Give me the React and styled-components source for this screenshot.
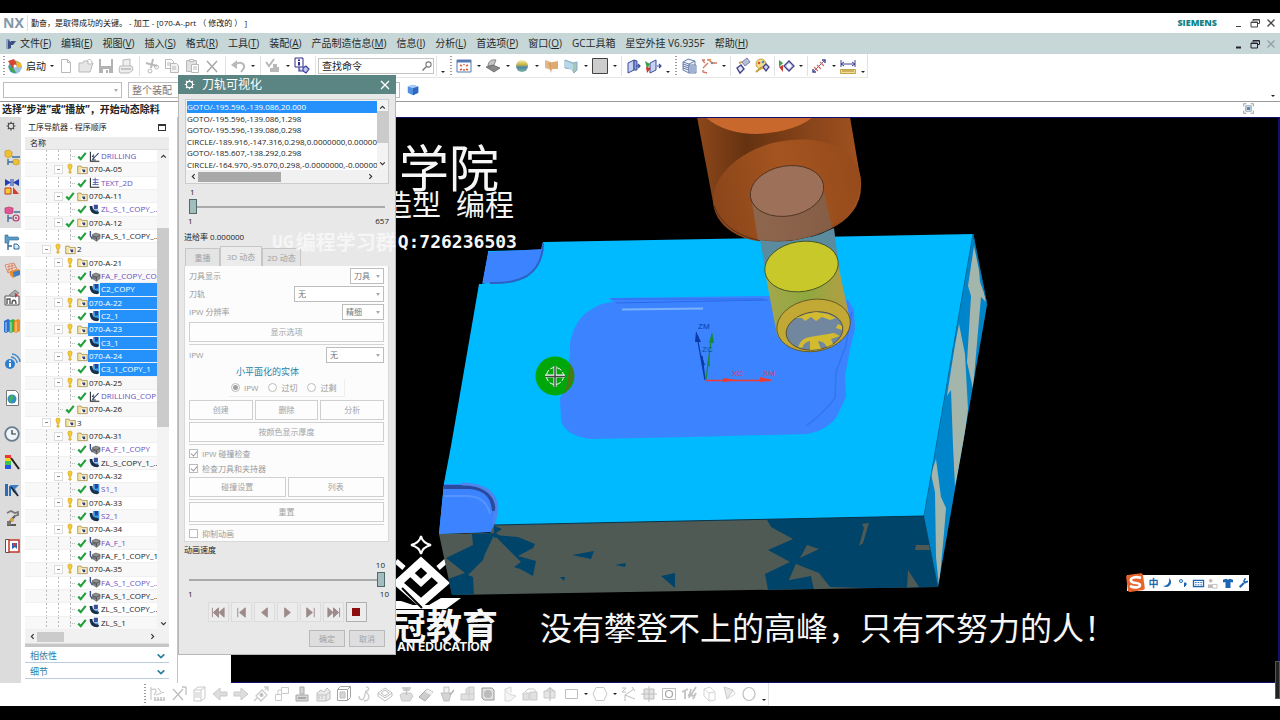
import React from "react";
import styled, { createGlobalStyle, css } from "styled-components";

const GlobalStyle = createGlobalStyle`
  * { box-sizing: border-box; }
  body {
    margin: 0;
    background: #000;
    color: #222;
    font: 8px/12px "Open Sans", "Noto Sans CJK SC", sans-serif;
  }
  button, input, select { font: inherit; color: inherit; margin: 0; }
`;

/* ---------- icons ---------- */

const Glyph = styled.svg`
  display: block;
  flex: none;
  width: ${(p) => p.$size || 16}px;
  height: ${(p) => p.$size || 16}px;
  overflow: visible;
`;

const G = "#b9b9b9";
const line = (d, stroke = G, w = 1, fill = "none") => (
  <path d={d} stroke={stroke} strokeWidth={w} fill={fill} />
);

const ICONS = {
  start: (
    <>
      <circle cx="8" cy="9" r="6.5" fill="#4d9ad8" />
      <path d="M1 3l6-2 3 6-4 4z" fill="#d8452f" />
      <path d="M6 10l8-5 1 5-5 6z" fill="#9bc0e0" />
      <path d="M9 3l5 2 0 4-4 1z" fill="#f0b72b" />
      <path d="M1 8l5 2 3 5-5-1z" fill="#3fa653" />
      <circle cx="8" cy="8" r="1.500" fill="#fff" />
    </>
  ),
  file: line("M3.5 1.5h6l3 3v10h-9zM9.5 1.5v3h3"),
  open: <>{line("M1 14V5h4l1-2h4v3h3l2-1-3 9z", G, 1, "#e6e6e6")}{line("M9 3c2-3 5-1 5 2")}</>,
  save: <><path d="M1 1h14v14H1z" fill="#b3b3b3" /><path d="M3 1h10v7H3zM5 11h6v4H5z" fill="#fff" /><path d="M8 12h2v3H8z" fill="#b3b3b3" /></>,
  print: <>{line("M5 8V2l7-1v7M2 8h12l1 4-4 3H2l-1-3z", G, 1, "#eee")}{line("M3 11h10", "#999")}</>,
  cut: <>{line("M9 1L7 10M2 5l11 3", G, 2)}<circle cx="6" cy="13" r="2" fill="none" stroke={G} /><circle cx="12.500" cy="9" r="2" fill="none" stroke={G} /></>,
  copy: <>{line("M1.500 1.500h6l2 2v7h-8zM3 5h4M3 7h4", G, 1)}{line("M6.500 5.500h6l2 2v7h-8zM8 9h4M8 11h4", G, 1, "#f2f2f2")}</>,
  paste: <>{line("M2.500 2.500h10v11h-10z", G, 1, "#e0e0e0")}{line("M5.500 1.500h4v2h-4z", G, 1, "#fff")}{line("M7.500 6.500h7v8h-7zM9 9h4M9 11h4", G, 1, "#fff")}</>,
  del: line("M3 3l10 11M13 3L3 14", "#a8a8a8", 1.5),
  undo: <><path d="M1 7l6-5v9z" fill={G} />{line("M6 6c5-3 9 0 8 4l-3 4", G, 2)}</>,
  finish: <>{line("M1 4l3 4 5-7", G, 2)}<path d="M8 6h4v3h2v5H5v-4h3z" fill={G} /></>,
  info: <><path d="M1 0h8v9H1z" fill="#fff" stroke="#2d2a8c" /><path d="M4 1.500h2v1.500H4zM4 4h2v3.500H4z" fill="#2d2a8c" />{line("M5 9v4h4M9 10l3-2 3 3-3 4-3-2z", "#3c3a9a", 1.200, "#b9c6ee")}</>,
  find: <><circle cx="10" cy="6" r="3.500" fill="none" stroke="#777" strokeWidth="1.400" />{line("M7 9l-5 5", "#777", 1.800)}</>,
  fit: <><path d="M1 2h14v12H1z" fill="#fff" stroke="#567bb0" /><path d="M1 2h14v2.500H1z" fill="#567bb0" />{line("M4 7l2 1M12 7l-2 1M4 12l2-1M12 12l-2-1M8 6v1M8 11v2", "#d9643c", 1.500)}</>,
  orient: <><path d="M1 9l7-2 7 3-6 4z" fill="#8a8a8a" stroke="#4c4c4c" strokeWidth=".6" /><path d="M3 8c0-5 4-7 8-6L9 7z" fill="#c4c4c4" stroke="#555" strokeWidth=".6" /></>,
  sphere: <><defs><linearGradient id="ball" x1="0" y1="0" x2="0" y2="1"><stop offset="0" stopColor="#f5f0b0" /><stop offset=".4" stopColor="#c7b443" /><stop offset=".6" stopColor="#4b87a8" /><stop offset="1" stopColor="#7fb6a0" /></linearGradient></defs><circle cx="8" cy="8" r="6" fill="url(#ball)" /></>,
  section: <><path d="M2 2l6 2v8l-6-2z" fill="#e2b88a" /><path d="M5 5l10-2v8H9l-1 4z" fill="#d99a5c" opacity=".85" /></>,
  plane: <><path d="M2 2l8 3 4-1v8l-3 3-2-4-7-1z" fill="#a3c9b6" stroke="#86a9c9" /><path d="M2 3l8 3v6l-8-3z" fill="#b7d8e8" /></>,
  swatch: <path d="M.5 .5h15v15H.5z" fill="#cdcdcd" stroke="#444" />,
  door: <><path d="M3 5l6-3v10l-6 3z" fill="#c6d2f0" stroke="#394a9b" /><path d="M9 2l3 1v9l-3 0z" fill="#8d9dd6" stroke="#394a9b" />{line("M11 8h4M13 6l2 2-2 2", "#394a9b", 1.200)}</>,
  doorRed: <><path d="M5 5l6-3v10l-6 3z" fill="#c6d2f0" stroke="#394a9b" /><path d="M0 3l5 3-3 5z" fill="#3da04b" /><path d="M1 9l5 1-4 5z" fill="#c93a2e" />{line("M12 8h4M14 6l2 2-2 2", "#394a9b", 1.200)}</>,
  stack: <>{line("M2 4l5-3 7 2v9l-6 3-6-3zM2 4l6 2 6-3M8 6v9M2 6l6 2M2 8l6 2M2 10l6 2", "#6a7faa", 1, "#e8eef8")}<path d="M8 7h7v8H8z" fill="#dbe5f6" stroke="#6a7faa" />{line("M9 9h5M9 11h5M9 13h5", "#6a7faa")}</>,
  path: <>{line("M1 2h3M6 2h2M2 3l2 2M7 5L2 10M2 12v2l4 1M8 2l3 3M12 5h4", "#d27660", 1.300)}<circle cx="9" cy="2" r="1.200" fill="#e8984a" /><circle cx="11" cy="5" r="1.300" fill="#888" /></>,
  tool1: <><path d="M3 10l4-3 3 4-4 4z" fill="#e8eaf5" stroke="#41428e" strokeWidth="1.400" /><path d="M8 4l5-4 3 4-5 4z" fill="#b5bdd9" stroke="#7780ae" /><path d="M5 5l3-1" stroke="#d9a23a" strokeWidth="2" /></>,
  tool2: <><circle cx="7" cy="6" r="5" fill="#f2dc8b" stroke="#c9a13c" /><circle cx="5" cy="5" r="1.300" fill="#d2563c" /><circle cx="9" cy="4" r="1.300" fill="#4a86c4" /><path d="M9 9l3-3 3 3-3 4z" fill="#cdd3ee" stroke="#41428e" strokeWidth="1.300" />{line("M8 9l-6 5", "#c79a3b", 2)}</>,
  verify: <><path d="M1 2l4 3-4 4z" fill="#3da04b" /><path d="M1 9l4-2v7z" fill="#c93a2e" /><path d="M6 8l5-5 5 5-5 5z" fill="#cdd3ee" stroke="#41428e" strokeWidth="1.300" /><circle cx="11" cy="8" r="2" fill="#fff" /></>,
  measure: <>{line("M2 14L14 2", "#6466a8", 1)}{line("M3 9l4 4M6 7l4 4M9 4l4 4", "#d3705f", 1.200)}{line("M11 2h3v3M2 11v3h3", "#41428e", 1.400)}</>,
  ruler: <>{line("M1 2v7M15 2v7M1 6h14M4 4L1 6l3 2M12 4l3 2-3 2", "#41428e", 1)}<path d="M.5 11.500h15v4H.5z" fill="#f0dd97" stroke="#c6a547" />{line("M3 12v2M5 12v2M7 12v2M9 12v2M11 12v2M13 12v2", "#a6852f")}</>,
  cube: <><path d="M2 4l6-2 6 2v7l-6 3-6-3z" fill="#4f8fe0" /><path d="M2 4l6-2 6 2-6 2z" fill="#a9cdf7" /><path d="M8 6l6-2v7l-6 3z" fill="#2f68bb" /></>,
  frame: <>{line("M1 5V1h4M11 1h4v4M15 11v4h-4M5 15H1v-4", "#9aa3ad", 1.500)}<path d="M4 4h8v8H4z" fill="#e3edf5" stroke="#6d8196" /><path d="M5.500 6h5v4h-5z" fill="#5c7fa6" /></>,
  gear: <><circle cx="8" cy="8" r="4.500" fill="none" stroke="currentColor" strokeWidth="1.600" />{line("M8 1v3M8 12v3M1 8h3M12 8h3M3 3l2 2M11 11l2 2M13 3l-2 2M5 11l-2 2", "currentColor", 1.800)}</>,
  asm: <><path d="M1 1l4-1 3 2v4L4 8 1 6z" fill="#f0bf32" stroke="#c0901d" strokeWidth=".6" /><path d="M9 10l3-1 3 1v4l-3 1-3-1z" fill="#f0bf32" stroke="#c0901d" strokeWidth=".6" />{line("M4 9v6M4 12h5M8 7h8", "#3e6f9f", 1.400)}</>,
  constraint: <><path d="M1 1l6 3.500L1 8zM15 1L9 4.500 15 8z" fill="#1f3fb5" />{line("M7 1v7M9 1v7", "#1f3fb5")}<path d="M1 10h6v6H1z" fill="#f4cb33" stroke="#c0392b" /><path d="M9 16v-7l6 7z" fill="#d63b2c" /></>,
  part: <><path d="M1 2l4-1 4 1v5l-4 1-4-1z" fill="#e25594" stroke="#a92d63" strokeWidth=".6" /><circle cx="12" cy="12" r="3" fill="none" stroke="#b43c6f" strokeWidth="1.200" /><circle cx="12" cy="12" r="1" fill="#b43c6f" />{line("M4 9v7M4 12h4M10 6h6", "#3e6f9f", 1.400)}</>,
  oper: <><path d="M1 1h3v2h10l1 2-1 1H5v3H1z" fill="#5b9cc9" stroke="#2f6896" strokeWidth=".6" />{line("M4 9v7M4 12h4", "#2f6896", 1.400)}{line("M10 10h3l2 2v3h-5z", "#2f6896", 1, "#dbeaf5")}</>,
  machine: <><path d="M1 3l9-2 3 6-9 4z" fill="#f5ddd1" stroke="#c66d54" strokeWidth=".7" />{line("M3 5l8-2M3 8l9-3M5 3v7M8 2v7", "#c66d54", 0.700)}<path d="M6 9l9-2 1 5-7 4-3-3z" fill="#e98c2e" /><path d="M9 10l7-2v5l-6 2z" fill="#3f7ec2" /></>,
  reuse: <><path d="M1 6h14v9H1z" fill="#fff" stroke="#555" />{line("M3 14V9h3v5M8 14c0-5 4-5 4 0", "#555", 1.400)}<path d="M5 5l6-5 4 3-6 4z" fill="#a9a9a9" stroke="#666" strokeWidth=".6" /><path d="M11 3l3 2-3 3z" fill="#c93a2e" /></>,
  books: <><path d="M0 3l4-2 2 1v11l-4 2-2-1z" fill="#2c6fd1" /><path d="M5 3l4-2 2 1v11l-4 2-2-1z" fill="#36b24a" /><path d="M10 3l4-2 2 1v11l-4 2-2-1z" fill="#f08c26" />{line("M2 4v10M7 4v10M12 4v10", "#fff", 0.700)}</>,
  web: <><circle cx="6" cy="10" r="5" fill="#2c7fd0" /><path d="M5 6.500h2V8H5zM5 9h2v4H5z" fill="#fff" />{line("M7 3c3 0 6 3 6 6M8 0c4 0 8 4 8 8", "#3b88cf", 1.400)}</>,
  globe: <>{line("M2.500 .5h9l3 3v12h-12z", "#777", 1, "#fff")}<circle cx="8" cy="9" r="4.500" fill="#2f8fc4" /><path d="M6 6l3-1 1 3-2 2-1 3-2-3z" fill="#46b058" /></>,
  clock: <><circle cx="8" cy="8" r="6.800" fill="#eef4fb" stroke="#6c7b8b" strokeWidth="1.800" />{line("M8 4v4h4", "#333", 1.200)}</>,
  spectrum: <><path d="M1 1h6v4H1z" fill="#e33" /><path d="M1 4h6v3H1z" fill="#f5d323" /><path d="M1 7h6v4H1z" fill="#3bc44e" /><path d="M1 11h6v4H1z" fill="#2a55e0" />{line("M7 4l8 11", "#222", 2)}</>,
  process: <><path d="M1 2h3v12H1zM5 4h2v10H5z" fill="#2c6fb8" /><path d="M6 3l9 0-4 4 4 7-6-4z" fill="#3f7ec2" />{line("M7 5l7 9", "#222", 1.500)}</>,
  robot: <>{line("M5 13l3-4 3-3M3 15h9", "#5b5b5b", 2.200)}{line("M3 3l4-2 4 2 3-1v3l-4 1", "#777", 1.800)}<circle cx="8" cy="10" r="2" fill="#e0a03a" /><path d="M3 11h4v4H3z" fill="#777" /></>,
  cards: <>{line("M1.500 1.500h4v13h-4z", "#555", 1, "#fff")}<path d="M5 2h10v12H5z" fill="#fff" stroke="#c0392b" strokeWidth="1.500" /><path d="M8 5h5v6l-2-2-3 2z" fill="#2f62b5" /><path d="M9 5h3v3H9z" fill="#d63b2c" /></>,
  folder: <><path d="M1 3h5l1 2h8v9H1z" fill="#f3e3a8" stroke="#9a8440" /><path d="M6 7h7v6H6z" fill="#fff" /><path d="M7 8l5 0v4H9z" fill="#3b3f77" /></>,
  check: line("M2 9l4 4 8-10", "#22a03a", 3.400),
  warn: <><path d="M8 0c3 0 4 2 3 5l-2 5H7L5 5c-1-3 0-5 3-5z" fill="#f4cb33" stroke="#bf9616" strokeWidth=".8" /><circle cx="8" cy="13" r="2" fill="#f4cb33" stroke="#bf9616" strokeWidth=".8" /></>,
  drill: <>{line("M2 1v14h13", "#222", 1.500)}{line("M5 12l9-9M7 5l-2 3 3 1-3 4h5", "#333d6a", 1.500)}</>,
  text: <>{line("M2 1v14h13", "#222", 1.500)}{line("M5 4h9M6 8h8M9 1v10M5 11h9", "#4b5aa4", 1.300)}</>,
  mill: <><path d="M7 1l6 0v6l-6 1z" fill="#3b4d9d" /><path d="M1 3c0 8 4 12 11 12l3-2-2-3c-5 0-8-2-8-7z" fill="#17314d" /><path d="M9 8l5 0-1 3-4-1z" fill="#57a4dc" /></>,
  millBlue: <><path d="M6 0h9v12l-5-1-4-4z" fill="#3c9ce8" /><path d="M8 0h5v6l-4 1z" fill="#2d3f91" /><path d="M1 3c0 8 4 12 11 12l3-2-2-3c-5 0-8-2-8-7z" fill="#17314d" /></>,
  face: <><path d="M5 5l5-2 6 2v6l-5 4-6-4z" fill="#8f8f8f" stroke="#444" strokeWidth=".8" />{line("M5 7l6 2v5M11 9l5-3M6 9l5 2", "#444", 1)}{line("M2 0v7l3 5", "#404d8f", 2)}</>,
  arrowL: <path d="M1 8l7-6v4h7v4H8v4z" fill="#d2d2d2" stroke={G} />,
  arrowR: <path d="M15 8L8 2v4H1v4h7v4z" fill="#d2d2d2" stroke={G} />,
  gPath: <>{line("M1 1v13M1 4c6-3 6 2 3 5M8 2l3 4M6 9l8-3M4 14h10", G, 1.200)}{line("M5 11v4M8 11v4M11 11v4M14 11v4", "#999", 1.200)}</>,
  gX: <>{line("M2 3l10 11M12 3L2 14M11 1h4M15 1v8", "#aaa", 1.300)}</>,
  gList: <>{line("M3 4l4-3h7v11l-4 3H3zM3 4h7v11M10 4l4-3M4 7h5M4 9h5M4 11h5", G, 1)}</>,
  gDia: <>{line("M3 10l6-6 5 5-6 6zM1 15l3-3M12 4l3-3M11 1h4v4", G, 1.300)}<circle cx="8.500" cy="9" r="2" fill="#aaa" /></>,
  gBoxes: <>{line("M7.500 1.500h7v6h-7zM1.500 8.500h6v6h-6zM4 8V4h3", G, 1)}</>,
  gMill: <><path d="M6 1h4v7H6zM2 9h12v6H2z" fill="#c8c8c8" stroke="#8c8c8c" />{line("M4 12h8", "#777", 1.500)}</>,
  gBlock: <><path d="M2 7l4-3 3 2 3-4 3 3v8l-4 2H2z" fill="#e3e3e3" stroke="#aaa" />{line("M2 9h9v6M11 9l4-3M4 13v-3M7 13v-3", "#aaa", 1)}</>,
  gCube: <>{line("M1.500 3.500h10v11h-10zM1.500 3.500l3-3h10v11l-3 3M11.500 3.500l3-3", "#888", 1)}<path d="M4 6h5v6H4z" fill="#c9c9c9" stroke="#aaa" /></>,
  gHook: <>{line("M10 1c4 0 3 4 0 4L8 12c-1 3-5 2-5-2M10 5l3 5c0 4-3 5-5 5", G, 1.300)}</>,
  gRhomb: <>{line("M1 7l7-5 7 5-7 5zM1 7v3l7 5 7-5V7M4 7l4-3 4 3-4 3z", "#aaa", 1)}</>,
  gTray: <><path d="M2 9l3-2h8l2 3-3 5H4z" fill="#d4d4d4" stroke={G} />{line("M4 2h9M8.500 2v7M5 4h7", "#aaa", 1.300)}</>,
  gTilt: <><path d="M1 11l8-8 6 3-8 9z" fill="#bdbdbd" stroke="#8f8f8f" /><path d="M9 3l6 3-2 3-6-3z" fill="#ececec" /></>,
  gCup: <><path d="M5 1h5v7H5z" fill="#eee" stroke="#aaa" /><path d="M2 7h10l-2 8H5z" fill="#c6c6c6" stroke="#aaa" />{line("M11 9l4-5", "#999", 1.500)}</>,
  gTurn: <><path d="M1 8h5V3l3-2h5v13H1z" fill="#d8d8d8" stroke={G} />{line("M9 1v13M6 8h8", "#bbb")}</>,
  gSolid: <><path d="M2 2h10l2 2v10H4l-2-2z" fill="#d7d7d7" stroke="#777" /><circle cx="8" cy="8" r="4" fill="#a6a6a6" /></>,
  gFan: <>{line("M4 15V3l4 5 7 2-6 5z M4 3l6-2v6", "#ccc", 1, "#f1f1f1")}</>,
  gPair: <><path d="M1 7h6v7H1zM8 6h7v8H8z" fill="#d6d6d6" stroke={G} />{line("M3 6l3-3h6l2 3", G)}</>,
  gDrum: <><path d="M2 5h11v7H2z" fill="#ddd" stroke={G} />{line("M8 1v14M4 5l4-3 4 3", "#b0b0b0", 1.200)}</>,
  gRect: line("M2.500 3.500h12v9h-12z", "#aaa"),
  gHex: line("M4 1.500h8l3 6.500-3 6.500H4L1 8z", G),
  gAxes: <>{line("M4 9l9-6M4 9l10 4M4 9v6M1 2h4l-4 4h4M11 1l3 4", "#aaa", 1)}</>,
  gGrid: <><path d="M3 3h10v10H3z" fill="#d9d9d9" />{line("M8 0v16M0 8h16M3 3h10v10H3z", "#aaa", 1)}</>,
  gFrameO: <>{line("M1.500 2.500h13v11h-13z", "#aaa", 1)}<circle cx="8" cy="8" r="3.500" fill="none" stroke="#888" strokeWidth="1.200" /></>,
  gTools: <>{line("M1 6l6-3M4 4v9M8 12l2-9M10 9l5-8M7 9l7 1M12 13l3-6", "#b0b0b0", 1.800)}</>,
  gBox: line("M3 3l6-2 5 5v8l-6 1-5-5zM3 3l5 4 6-1M8 7v8", "#c6c6c6"),
  gCone: <><path d="M3 1l9 3-6 9z" fill="#e2e2e2" stroke={G} />{line("M12 4l2 4-8 5", "#ccc")}</>,
  gO: <ellipse cx="8" cy="8" rx="6" ry="6.500" fill="none" stroke="#aaa" strokeWidth="1.200" />,
};

const Icon = ({ name, size }) => (
  <Glyph viewBox="0 0 16 16" $size={size} aria-hidden="true">{ICONS[name]}</Glyph>
);

/* ---------- page frame ---------- */

const Page = styled.div`
  position: relative;
  display: flex;
  flex-direction: column;
  min-height: 100vh;
  overflow: hidden;
  background: #fff;
`;
const Letterbox = styled.div`
  flex: none;
  height: ${(p) => p.$h}px;
  background: #000;
`;
const TitleBar = styled.header`
  display: flex;
  align-items: center;
  height: 20px;
  padding: 0 3px;
  background: #fff;
`;
const Logo = styled.span`
  width: 25px;
  border-right: 1px solid #ddd;
  color: #8199a9;
  font: bold 14px/16px "Open Sans", sans-serif;
`;
const DocTitle = styled.h1`
  flex: 1;
  margin: 0 0 0 3px;
  color: #111;
  font-size: 8px;
  font-weight: 400;
  white-space: pre;
`;
const Brand = styled.span`
  margin-right: 16px;
  color: #108288;
  font: 800 9px/12px "Open Sans", sans-serif;
`;
const MenuBar = styled.nav`
  display: flex;
  align-items: center;
  height: 21px;
  padding: 0 3px 0 5px;
  background: #c7d6d6;
`;
const MenuList = styled.div`
  display: flex;
  flex: 1;
  gap: 10px;
  margin-left: 3px;
`;
const MenuButton = styled.button`
  padding: 0 0 2px;
  border: 0;
  background: none;
  color: #1f2b2b;
  font-size: 10px;
  line-height: 14px;
  white-space: nowrap;
`;
const WindowButtons = styled.div`
  display: flex;
  gap: 4px;
  color: ${(p) => (p.$dark ? "#223" : "#444")};
`;
const WindowButton = styled.button`
  display: grid;
  place-items: center;
  width: 12px;
  height: 12px;
  padding: 0;
  border: 0;
  background: none;
  opacity: ${(p) => (p.$dim ? 0.3 : 1)};
`;

const WinControls = ({ dark }) => (
  <WindowButtons $dark={dark}>
    <WindowButton aria-label="最小化"><Glyph viewBox="0 0 10 10" $size={10}><path d="M2 8.500h5" stroke="currentColor" strokeWidth={dark ? 2 : 1} /></Glyph></WindowButton>
    <WindowButton aria-label="还原"><Glyph viewBox="0 0 10 10" $size={10}><path d="M3 3V1.500h6.500v4H8M1 4h6.500v5H1zM1 4.500h6M3 2h6" fill="none" stroke="currentColor" /></Glyph></WindowButton>
    <WindowButton aria-label="关闭" $dim={dark}><Glyph viewBox="0 0 10 10" $size={10}><path d="M1.500 1.500l7 7M8.500 1.500l-7 7" stroke="currentColor" strokeWidth="1.300" /></Glyph></WindowButton>
  </WindowButtons>
);

const ToolBar = styled.div`
  display: flex;
  align-items: center;
  flex: none;
  height: ${(p) => p.$h}px;
  padding-left: ${(p) => p.$indent || 0}px;
  background: #fff;
`;
const ToolSet = styled.div`
  display: flex;
  align-items: center;
  height: 100%;
  border-right: 1px solid #e2e2e2;
  border-bottom: 1px solid #e6e6e6;
`;
const IconRun = styled.div`
  display: flex;
  justify-content: space-between;
  width: 433px;
`;
const ToolButton = styled.button`
  display: flex;
  align-items: center;
  justify-content: center;
  width: 20px;
  height: 20px;
  padding: 0;
  border: 0;
  background: none;
  opacity: ${(p) => (p.$dim ? 0.75 : 1)};
`;
const StartButton = styled(ToolButton)`
  width: 40px;
  justify-content: flex-start;
  gap: 3px;
  padding: 0;
  font-size: 10px;
  white-space: nowrap;
`;
const CaretButton = styled(ToolButton)`
  width: 9px;
  align-items: ${(p) => (p.$low ? "flex-end" : "center")};
  &::after {
    content: "";
    margin-bottom: ${(p) => (p.$low ? 3 : 0)}px;
    border: 2px solid transparent;
    border-top-color: #222;
    border-bottom: 0;
  }
`;
const Grip = styled.span`
  flex: none;
  align-self: center;
  width: 7px;
  height: 20px;
  background: repeating-linear-gradient(#9b9b9b 0 1px, transparent 1px 3px) 3px 0 / 2px 100% no-repeat;
`;
const Sep = styled.span`
  flex: none;
  width: ${(p) => (p.$wide ? 6 : 4)}px;
  height: 20px;
  background: linear-gradient(#e2e2e2, #e2e2e2) center / 1px 100% no-repeat;
`;
const SearchBox = styled.label`
  display: flex;
  align-items: center;
  width: 116px;
  height: 16px;
  border: 1px solid #c4c4c4;
`;
const SearchInput = styled.input`
  flex: 1;
  min-width: 0;
  padding: 0 3px;
  border: 0;
  font-size: 10px;
  line-height: 14px;
  &::placeholder { color: #222; opacity: 1; }
`;

const Tools = ({ list, wide, dim }) =>
  list.map((it, i) => {
    if (it === "|") return <Sep key={i} $wide={wide} />;
    if (it === "v") return <CaretButton key={i} aria-label="更多" />;
    if (it === "_") return <CaretButton key={i} $low aria-label="工具条选项" />;
    if (it === "#") return <Grip key={i} />;
    return <ToolButton key={i} $dim={dim} aria-label={it}><Icon name={it} /></ToolButton>;
  });

const FilterBar = styled(ToolBar)`
  gap: 6px;
  padding: 0 3px;
  border-bottom: 1px solid #999;
`;
const FilterGap = styled.div`
  flex: 1;
`;
const PromptBar = styled.div`
  display: flex;
  align-items: center;
  justify-content: space-between;
  height: 15px;
  padding: 0 26px 2px 2px;
  color: #222;
  font-size: 10px;
  font-weight: 700;
`;

const FieldWrap = styled.span`
  position: relative;
  display: inline-flex;
  width: ${(p) => p.$w}px;
  height: 16px;
  &::after {
    content: "";
    position: absolute;
    right: 4px;
    top: 7px;
    border: 2px solid transparent;
    border-top: 3px solid #aaa;
    border-bottom: 0;
    pointer-events: none;
  }
`;
const Field = styled.select`
  width: 100%;
  padding: 0 3px;
  border: 1px solid #bdbdbd;
  border-radius: 0;
  background: #fff;
  color: #777;
  font-size: ${(p) => (p.$big ? 10 : 8)}px;
  line-height: 12px;
  appearance: none;
`;
const Choice = ({ w, value, label, id, big }) => (
  <FieldWrap $w={w}>
    <Field id={id} aria-label={label} $big={big}><option>{value}</option></Field>
  </FieldWrap>
);

/* ---------- work area ---------- */

const Work = styled.main`
  position: relative;
  display: flex;
  flex: 1;
`;
const ResourceBar = styled.nav`
  display: flex;
  flex-direction: column;
  width: 21px;
  background: #dcdcdc;
  color: #444;
`;
const ResourceTab = styled.button`
  display: grid;
  place-items: center;
  flex: none;
  height: 28px;
  margin-top: ${(p) => (p.$gap ? 8 : 0)}px;
  padding: 0 0 0 2px;
  border: 0;
  background: ${(p) => (p.$active ? "#fff" : "none")};
`;
const SettingsTab = styled(ResourceTab)`
  height: 18px;
  margin-bottom: 9px;
  padding: 0;
`;
const Navigator = styled.section`
  display: flex;
  flex-direction: column;
  width: 157px;
  padding: 0 8px 4px 4px;
  border-right: 1px solid #c4c4c4;
`;
const NavHeader = styled.div`
  display: flex;
  align-items: center;
  justify-content: space-between;
  height: 20px;
  padding: 0 3px;
`;
const NavTitle = styled.h2`
  margin: 0;
  font-size: 8px;
  font-weight: 400;
`;
const PinButton = styled.button`
  width: 8px;
  height: 7px;
  padding: 0;
  border: 1px solid #333;
  border-top-width: 2px;
  background: none;
`;
const ColumnHeader = styled.div`
  height: 13px;
  padding-left: 5px;
  background: #ececec;
  border-bottom: 1px solid #ddd;
`;
const TreeArea = styled.div`
  display: flex;
  flex: 1;
`;
const Tree = styled.ul`
  display: grid;
  grid-auto-rows: 1fr;
  flex: 1;
  min-width: 0;
  margin: 0;
  padding: 0;
  list-style: none;
  overflow: hidden;
`;
const TreeRow = styled.li`
  display: flex;
  align-items: center;
  min-width: 0;
  padding-left: 15px;
  border-bottom: 1px solid #f0f0f0;
  background: ${(p) => (p.$odd ? "#f8f8f8" : "#fff")};
`;
const Guide = styled.span`
  flex: none;
  align-self: stretch;
  width: 12px;
  background:
    repeating-linear-gradient(#bbb 0 2px, transparent 2px 4px) 6px 0 / 1px 100% no-repeat
    ${(p) => (p.$elbow ? ", repeating-linear-gradient(90deg, #bbb 0 1px, transparent 1px 2px) 6px 6px / 6px 1px no-repeat" : "")};
`;
const Toggle = styled.button`
  display: grid;
  place-items: center;
  flex: none;
  width: 12px;
  height: 12px;
  padding: 0;
  border: 0;
  background: none;
  &::after {
    content: "";
    width: 7px;
    height: 7px;
    border: 1px solid #ddd;
    background: linear-gradient(#888, #888) center / 3px 1px no-repeat #fff;
  }
`;
const Cell = styled.span`
  display: grid;
  place-items: center;
  flex: none;
  width: 12px;
`;
const RowLabel = styled.span`
  align-self: stretch;
  flex: 1;
  overflow: hidden;
  white-space: nowrap;
  padding-left: 1px;
  color: ${(p) => (p.$sel ? "#fff" : p.$purple ? "#6a4fc0" : "#222")};
  background: ${(p) => (p.$sel ? "#2592fb" : "none")};
`;
const VScroll = styled.div`
  display: flex;
  flex-direction: column;
  align-items: center;
  justify-content: space-between;
  width: ${(p) => p.$w}px;
  margin-left: auto;
  padding: 3px 0;
  background: linear-gradient(#cbcbcb, #cbcbcb) 0 ${(p) => p.$at}px / 100% ${(p) => p.$len}px no-repeat #f3f3f3;
`;
const HScroll = styled.div`
  display: flex;
  align-items: center;
  justify-content: space-between;
  flex: none;
  height: ${(p) => p.$h}px;
  padding: 0 ${(p) => p.$end || 4}px 0 4px;
  background: linear-gradient(${(p) => p.$tone}, ${(p) => p.$tone}) 12px 50% / ${(p) => p.$len}px 10px no-repeat #f1f1f1;
`;
const ScrollButton = styled.button`
  display: block;
  padding: 0;
  border: 0;
  background: none;
  color: #333;
`;
const DIRS = { up: "M1 4l2-2 2 2", down: "M1 2l2 2 2-2", left: "M4 1L2 3l2 2", right: "M2 1l2 2-2 2" };
const Chevron = ({ dir, size = 7, color = "currentColor" }) => (
  <Glyph viewBox="0 0 6 6" $size={size}><path d={DIRS[dir]} fill="none" stroke={color} strokeWidth="1" /></Glyph>
);
const Scroller = ({ dir }) => <ScrollButton aria-label={dir}><Chevron dir={dir} /></ScrollButton>;

const Splitter = styled.div`
  height: 4px;
  border-top: 1px solid #ddd;
  background: #c6c6c6;
`;
const Fold = styled.button`
  display: flex;
  align-items: center;
  justify-content: space-between;
  height: 16px;
  padding: 2px 3px 0 5px;
  border: 0;
  border-bottom: 1px solid #bcd;
  background: none;
  color: #2a7ea6;
  font-size: 9px;
`;
const Backdrop = styled.div`
  width: 53px;
  background: #fff;
`;
const Viewport = styled.section`
  position: relative;
  flex: 1;
  overflow: hidden;
  border: solid #10106e;
  border-width: 1px 2px 1px 0;
  background: #000;
`;
const Scene = styled.svg`
  position: absolute;
  inset: 0;
  width: 100%;
  height: 100%;
`;
const Watermark = styled.span`
  position: absolute;
  left: ${(p) => p.$x}px;
  top: ${(p) => p.$y}px;
  color: #f6f6f6;
  font-size: ${(p) => p.$size}px;
  line-height: ${(p) => p.$size}px;
  font-weight: ${(p) => (p.$bold ? 700 : 400)};
  white-space: pre;
  pointer-events: none;
`;
const WideMark = styled(Watermark)`
  font-family: Inter, sans-serif;
`;
const GroupMark = styled(Watermark)`
  z-index: 3;
  display: flex;
  align-items: center;
  gap: 2px;
  font-family: "Noto Sans CJK SC", sans-serif;
`;
const Mono = styled.span`
  font-family: "DejaVu Sans Mono", monospace;
  font-size: 18px;
`;

/* ---------- dialog ---------- */

const Dialog = styled.section`
  position: absolute;
  z-index: 2;
  left: 178px;
  top: 75px;
  width: 218px;
  border: solid #b8b8b8;
  border-width: 0 1px 1px;
  background: #e8e8e8;
`;
const DialogTitle = styled.header`
  display: flex;
  align-items: center;
  gap: 7px;
  height: 19px;
  margin: 0 -1px;
  padding: 0 6px;
  background: #5b8583;
  color: #fff;
`;
const DialogName = styled.h2`
  flex: 1;
  margin: 0;
  font-size: 12px;
  line-height: 16px;
  font-weight: 400;
`;
const CloseButton = styled.button`
  padding: 0;
  border: 0;
  background: none;
  color: #fff;
`;
const ListFrame = styled.div`
  margin: 5px 6px 0;
  border: 1px solid #ccc;
  background: #f1f1f1;
`;
const ListRow = styled.div`
  display: flex;
  padding: 1px 0 0 1px;
`;
const PathList = styled.ol`
  display: grid;
  grid-auto-rows: 1fr;
  flex: 1;
  min-width: 0;
  height: 69px;
  margin: 0;
  padding: 0;
  overflow: hidden;
  list-style: none;
  background: #fff;
`;
const PathItem = styled.li`
  overflow: hidden;
  line-height: 11px;
  white-space: nowrap;
  color: ${(p) => (p.$sel ? "#fff" : "#222")};
  background: ${(p) => (p.$sel ? "#2592fb" : "none")};
`;
const SliderBlock = styled.div`
  margin: ${(p) => p.$top}px 6px 0;
`;
const Ends = styled.div`
  display: flex;
  justify-content: ${(p) => (p.$end ? "flex-end" : "space-between")};
  padding: 0 ${(p) => (p.$inset ? 4 : 0)}px 0 ${(p) => (p.$inset ? 5 : 3)}px;
`;
const Slider = styled.input`
  display: block;
  width: 196px;
  height: 17px;
  margin: 0 4px;
  appearance: none;
  background: linear-gradient(#a9a9a9, #a9a9a9) center / 100% 2px no-repeat;
  &::-webkit-slider-thumb {
    appearance: none;
    width: 8px;
    height: 15px;
    border: 1px solid #4f6a6a;
    background: #a3bcbc;
  }
`;
const Caption = styled.p`
  margin: ${(p) => p.$top}px 6px 0 5px;
  color: #222;
`;
const Tabs = styled.div`
  display: flex;
  align-items: flex-end;
  height: 20px;
  margin: 3px 6px 0;
`;
const Tab = styled.button`
  height: ${(p) => (p.$on ? 20 : 18)}px;
  padding: 0;
  width: ${(p) => p.$w}px;
  border: 1px solid #c6c6c6;
  border-bottom: 0;
  background: ${(p) => (p.$on ? "#ececec" : "#e4e4e4")};
  color: #a2a2a2;
  white-space: nowrap;
`;
const Panel = styled.div`
  display: flex;
  flex-direction: column;
  gap: 2px;
  height: 276px;
  margin: 0 6px 0 5px;
  padding: 2px 4px 0;
  border: 1px solid #d8d8d8;
  border-top: 0;
  background: #fcfcfc;
  color: #9a9a9a;
`;
const FormRow = styled.div`
  display: flex;
  align-items: center;
  justify-content: space-between;
  height: 16px;
`;
const ButtonRow = styled.div`
  display: flex;
  gap: 2px;
`;
const PushButton = styled.button`
  flex: 1;
  height: 20px;
  padding: 0;
  border: 1px solid #d0d0d0;
  background: #fdfdfd;
  color: #a2a2a2;
`;
const Rule = styled.hr`
  width: 100%;
  height: 1px;
  margin: 0;
  border: 0;
  background: #d4d4d4;
`;
const Facet = styled.fieldset`
  margin: 0;
  padding: 0;
  height: 33px;
  border: 0;
  text-align: center;
`;
const FacetTitle = styled.legend`
  margin: 0 auto;
  padding: 0 38px 0 0;
  color: #2a7ea6;
  font-size: 9px;
  line-height: 14px;
`;
const RadioRow = styled.div`
  display: flex;
  gap: 10px;
  width: 116px;
  height: 18px;
  margin-left: 40px;
  padding-left: 2px;
  align-items: center;
  border-right: 1px solid #eee;
  border-bottom: 1px solid #eee;
`;
const Option = styled.label`
  display: flex;
  align-items: center;
  gap: 4px;
  height: 13px;
  white-space: nowrap;
`;
const markStyle = css`
  flex: none;
  width: 9px;
  height: 9px;
  appearance: none;
  border: 1px solid #bcbcbc;
  background: #fff;
`;
const Radio = styled.input`
  ${markStyle}
  border-radius: 50%;
  &:checked { background: radial-gradient(#a0a0a0 0 2px, #fff 3px); }
`;
const Tick = styled.input`
  ${markStyle}
  position: relative;
  &:checked::after {
    content: "";
    position: absolute;
    left: 2px;
    top: 0;
    width: 3px;
    height: 5px;
    border: solid #999;
    border-width: 0 1px 1px 0;
    transform: rotate(40deg);
  }
`;
const Player = styled.div`
  display: flex;
  justify-content: center;
  gap: 2px;
  margin: 2px 0 0;
`;
const PlayButton = styled.button`
  display: grid;
  place-items: center;
  width: 21px;
  height: 20px;
  padding: 0;
  border: 1px solid ${(p) => (p.$on ? "#b0b0b0" : "#dcdcdc")};
  background: #ececec;
`;
const Actions = styled.div`
  display: flex;
  justify-content: flex-end;
  gap: 4px;
  padding: 8px 10px 7px;
`;
const ActionButton = styled(PushButton)`
  flex: none;
  width: 36px;
  height: 17px;
  border-color: #b9b9b9;
  background: #dedede;
`;

/* ---------- input method strip ---------- */

const ImeBar = styled.div`
  position: absolute;
  right: 29px;
  bottom: 91px;
  display: flex;
  align-items: center;
  gap: 2px;
  width: 122px;
  height: 16px;
  background: #fff;
`;
const ImeButton = styled.button`
  display: grid;
  place-items: center;
  width: 13px;
  height: 16px;
  padding: 0;
  border: 0;
  background: none;
  color: #1c66b4;
  font-size: 10px;
  font-weight: 700;
  line-height: 14px;
`;
const EdgeHandle = styled.span`
  position: absolute;
  right: 0;
  bottom: -16px;
  width: 5px;
  height: 38px;
  border: 1px solid #555;
  background: #222;
`;

/* ---------- data ---------- */

const MENUS = [
  ["文件", "F"], ["编辑", "E"], ["视图", "V"], ["插入", "S"], ["格式", "R"], ["工具", "T"], ["装配", "A"],
  ["产品制造信息", "M"], ["信息", "I"], ["分析", "L"], ["首选项", "P"], ["窗口", "O"], ["GC工具箱"],
  ["星空外挂 V6.935F"], ["帮助", "H"],
];

const RESOURCES = [
  ["asm"], ["constraint"], ["part"], ["oper"], ["machine"], ["reuse"], ["books"],
  ["web", 1], ["globe", 1], ["clock", 1], ["spectrum"], ["process"], ["robot"], ["cards"],
];

// [level, label, status, icon, style, leaf]  style: p = purple, s = selected
const ROWS = [
  [2, "DRILLING", "check", "drill", "p"],
  [1, "070-A-05", "warn", "folder"],
  [2, "TEXT_2D", "check", "text", "p"],
  [1, "070-A-11", "check", "folder"],
  [2, "ZL_S_1_COPY_..", "check", "mill", "p"],
  [1, "070-A-12", "check", "folder"],
  [2, "FA_S_1_COPY_...", "check", "face"],
  [0, "2", "warn", "folder"],
  [1, "070-A-21", "warn", "folder"],
  [2, "FA_F_COPY_CO", "check", "face", "p"],
  [2, "C2_COPY", "check", "millBlue", "s"],
  [1, "070-A-22", "warn", "folder", "s"],
  [2, "C2_1", "check", "millBlue", "s"],
  [1, "070-A-23", "warn", "folder", "s"],
  [2, "C3_1", "check", "millBlue", "s"],
  [1, "070-A-24", "warn", "folder", "s"],
  [2, "C3_1_COPY_1", "check", "millBlue", "s"],
  [1, "070-A-25", "warn", "folder"],
  [2, "DRILLING_COP", "check", "drill", "p"],
  [1, "070-A-26", "check", "folder", "", true],
  [0, "3", "warn", "folder"],
  [1, "070-A-31", "warn", "folder"],
  [2, "FA_F_1_COPY", "check", "face", "p"],
  [2, "ZL_S_COPY_1_..", "check", "mill"],
  [1, "070-A-32", "warn", "folder"],
  [2, "S1_1", "check", "millBlue", "p"],
  [1, "070-A-33", "warn", "folder"],
  [2, "S2_1", "check", "millBlue", "p"],
  [1, "070-A-34", "warn", "folder"],
  [2, "FA_F_1", "check", "face", "p"],
  [2, "FA_F_1_COPY_1", "check", "face"],
  [1, "070-A-35", "warn", "folder"],
  [2, "FA_S_1_COPY_..", "check", "face", "p"],
  [2, "FA_S_1_COPY_..", "check", "face"],
  [2, "ZL_S_1_COPY_..", "check", "mill"],
  [2, "ZL_S_1", "check", "mill"],
];

const PATHS = [
  "GOTO/-195.596,-139.086,20.000",
  "GOTO/-195.596,-139.086,1.298",
  "GOTO/-195.596,-139.086,0.298",
  "CIRCLE/-189.916,-147.316,0.298,0.0000000,0.0000000",
  "GOTO/-185.607,-138.292,0.298",
  "CIRCLE/-164.970,-95.070,0.298,-0.0000000,-0.0000000",
];

const PLAY = [
  ["到起点", "M1.500 3v10M8 3v10L2.500 8zM14 3v10L8.500 8z"],
  ["上一步", "M4 3v10M12 3v10L6 8z"],
  ["倒放", "M11 3v10L5 8z"],
  ["播放", "M5 3v10l6-5z"],
  ["下一步", "M12 3v10M4 3v10l6-5z"],
  ["到终点", "M14.500 3v10M2 3v10l5.500-5zM8 3v10l5.500-5z"],
];

const BOTTOM = [
  "gPath", "gX", "gList", "arrowL", "arrowR", "gDia", "gBoxes", "gMill", "gBlock", "gCube", "gHook",
  "gRhomb", "gTray", "gTilt", "gCup", "gTurn", "gSolid", "gFan", "gPair", "gDrum", "gRect",
];

/* ---------- sections ---------- */

const MachiningScene = () => (
  <Scene viewBox="231 118 1047 564" preserveAspectRatio="xMinYMin slice" aria-label="刀轨仿真">
    <defs>
      <linearGradient id="holder"><stop offset="0" stopColor="#8e481b" /><stop offset=".3" stopColor="#653211" /><stop offset=".7" stopColor="#8a451a" /><stop offset="1" stopColor="#a0521f" /></linearGradient>
      <linearGradient id="lip"><stop offset="0" stopColor="#8a451a" /><stop offset=".5" stopColor="#a4541f" /><stop offset="1" stopColor="#964b1c" /></linearGradient>
      <linearGradient id="shank"><stop offset="0" stopColor="#8c6b57" /><stop offset="1" stopColor="#80604c" /></linearGradient>
      <linearGradient id="cutter"><stop offset="0" stopColor="#a5a74c" /><stop offset=".5" stopColor="#8fa83f" /><stop offset="1" stopColor="#b69d45" /></linearGradient>
      <clipPath id="front"><path d="M439 534L490 533 494 525 924 516 938 587 452 595z" /></clipPath>
      <clipPath id="side"><path d="M973 234L987 305 938 587 924 516z" /></clipPath>
    </defs>

    <g fill="none" stroke="#fff">
      <path d="M421 536q1.500 7 10 9q-8.500 2-10 9q-1.500-7-10-9q8.500-2 10-9z" strokeWidth="2" />
      <path d="M421 562L444 583 421 603 398 583z" strokeWidth="8" />
      <path d="M408 571L421 583 434 571" strokeWidth="6" />
      <path d="M421 568L426 573 421 578 416 573z" fill="#000" stroke="none" />
      <path d="M396 561L404 568M446 561L438 568" strokeWidth="5" />
    </g>
    <path d="M381 601h20l12 4h16l12-7h20l-15 11h-65z" fill="#fff" />
    <path d="M402 588L422 608" stroke="#000" strokeWidth="2" />

    <path d="M543 242L973 234 924 516 439 534 444 483 451 446 479 284 486 283 488 251 541 250z" fill="#00baff" />
    <path d="M488 252L542 249Q541 270 522 279Q508 284 482 283z" fill="#3c84ff" />
    <path d="M543 243Q543 265 527 276Q512 284 490 283" fill="none" stroke="#2c62c4" strokeWidth="2" />
    <path d="M482 252L488 251 482 284 478 284z" fill="#000" />
    <path d="M444 484H470Q496 486 498 506Q497 522 491 532L439 534z" fill="#3c84ff" />
    <path d="M444 487H470Q493 489 494 511" fill="none" stroke="#2a4b9c" strokeWidth="4" />
    <path d="M462 484Q493 484 497 507L494 524" fill="none" stroke="#4f86ee" strokeWidth="3" />
    <path d="M444 496H466Q486 496 490 514" fill="none" stroke="#6fa3ff" strokeWidth="2" opacity=".5" />

    <path d="M608 298L768 296 848 300 854 310 855 329 850 349 845 376 846 397 837 416Q828 430 807 434L690 437 590 439Q563 435 561 419L560 399 564 388 570 356 570 343Q575 318 592 309Q600 303 614 302z" fill="#3c84ff" />
    <path d="M612 299L764 299M616 303L768 300" stroke="#2d68e8" fill="none" />
    <path d="M852 312L846 345 836 372 835 398Q822 415 806 426" fill="none" stroke="#2d68e0" strokeWidth="1.500" opacity=".55" />
    <path d="M622 309.500L703 308.500" stroke="#7bb0ff" strokeWidth="2" />

    <path d="M439 534L490 533 494 525 924 516 938 587 452 595z" fill="#505a54" />
    <g fill="#00446a" clipPath="url(#front)">
      <path d="M472 534L495 533 485 554 483 560 468 575 473 577 474 595 450 596 448 579 465 573 446 558 473 545z" />
      <path d="M494 535L518 537 535 544 533 548 518 556 536 561 533 576 520 569 514 567 521 562z" />
      <path d="M572 555L594 551 591 559zM615 565L626 563 625 567zM661 576L675 573 675 588zM560 577h5l-1 4z" />
      <path d="M766 518L924 515 940 590 830 587 819 573 796 564 789 580 812 575 814 589 768 590 765 574 790 562 768 550 793 539 771 527z" />
      <path d="M494 526l8 3-6 4 4 3-6 2z" />
    </g>
    <g fill="#505a54" clipPath="url(#front)">
      <path d="M800 558L807 545 819 549zM862 524l7-1-6 20-4 3 5-18zM870 537h4M907 588l1-18 11 17zM916 545l13 0 1 5h-15zM789 580l7-16 24 12 3 14h-9l-3-14z" />
    </g>

    <path d="M973 234L987 305 938 587 924 516z" fill="#0085ca" />
    <g fill="#a4b5ac" clipPath="url(#side)">
      <path d="M974 246L979 270 980 282 988 304 981 297 973 389 967 362 971 296 968 286z" />
      <path d="M959 324L965 354 968 409 964 442 955 487 953 446 951 390 947 396 951 370 955 345z" />
      <path d="M936 459L941 497 946 508 944 533 939 587 936 557 935 492 931 474z" />
    </g>
    <path d="M973 234L924 516M973 234L987 305" stroke="#0673a8" fill="none" />
    <path d="M494 525L924 516" stroke="#07344b" fill="none" />

    <path d="M697 117H850L861 182Q863 214 828 230Q792 246 757 240Q718 226 713 202z" fill="url(#holder)" />
    <path d="M705 117Q725 134 757 134Q795 132 813 117z" fill="#c8682c" />
    <ellipse cx="787" cy="191" rx="75" ry="50" fill="url(#lip)" transform="rotate(-13 787 191)" />
    <path d="M714 206Q724 232 757 240Q795 245 828 230" stroke="#50301a" fill="none" />
    <path d="M760 240Q799 246 834 228L839 268 766 272z" fill="#5a8b9e" />
    <path d="M751 196L758 240Q800 245 832 228L823 187z" fill="url(#shank)" opacity=".85" />
    <ellipse cx="787" cy="191" rx="37" ry="25" fill="#9d7159" stroke="#442c20" strokeWidth=".8" transform="rotate(-10 787 191)" />
    <path d="M765 272L777 335Q790 353 814 352Q848 343 850 320L838 264z" fill="url(#cutter)" />
    <ellipse cx="801.500" cy="266.500" rx="37" ry="25" fill="#c8c82b" stroke="#3c461d" strokeWidth=".8" transform="rotate(-9 801.500 266.500)" />
    <ellipse cx="813.500" cy="325.500" rx="37" ry="26" fill="#c2a936" stroke="#594d20" strokeWidth=".8" transform="rotate(-9 813 325)" />
    <ellipse cx="814.500" cy="331" rx="28.500" ry="19" fill="#7187a0" stroke="#4c452b" strokeWidth=".8" transform="rotate(-8 814 331)" />
    <path d="M796 318l10-4 10-2 12 2 8 4-6 2-8-3-6 4-5-4-6 4-3-3zM838 324l4 2 0 4-6-2zM798 347q3-9 12-10l24-4 6 3-9 3 2 5-6 3q-3-6-9-6l3 8-11 1 0-9q-6 1-8 7z" fill="#d2bb2f" />

    <circle cx="555" cy="376" r="19.500" fill="#00a70b" />
    <path d="M570 364Q580 377 564 394Q568 383 570 364z" fill="#4a7a15" />
    <circle cx="555" cy="376" r="8.500" fill="none" stroke="#fff" strokeDasharray="5 2" />
    <path d="M545 376H565M555 366V387" stroke="#fff" strokeWidth="3" />
    <path d="M545 376.500H565M555 366V387" stroke="#444" strokeWidth="1.500" />

    <g fill="none" strokeWidth="1.300">
      <path d="M705 380L697 336M705 380L702 356" stroke="#0a3aa8" />
      <path d="M696 331l5 11h-6zM701 354l4 11-3 1z" fill="#0a3aa8" />
      <path d="M706 379L712 334M706 379L709 357" stroke="#168a3c" />
      <path d="M712 332l2 11h-5zM709 354l1 12h-3z" fill="#168a3c" />
      <path d="M705 380.500H771" stroke="#ef3a34" />
      <path d="M737 380l-14-2v4zM772 380l-12-3v5z" fill="#ef3a34" />
    </g>
    <g fontFamily="Liberation Sans, sans-serif" fontSize="8">
      <text x="698" y="329" fill="#0a3aa8">ZM</text>
      <text x="702" y="352" fill="#0a4f9a">ZC</text>
      <text x="732" y="376" fill="#dc3a56">XC</text>
      <text x="763" y="376" fill="#dc3a56">XM</text>
    </g>
  </Scene>
);

const NavTree = () => (
  <TreeArea>
    <Tree>
      {ROWS.map(([level, label, status, icon, look, leaf], i) => (
        <TreeRow key={i} $odd={i % 2 === 1}>
          {level > 0 && <Guide />}
          {level > 1 && <Guide />}
          {level > 1 || leaf ? <Guide $elbow /> : <Toggle aria-label="折叠" />}
          <Cell><Icon name={status} size={10} /></Cell>
          <Cell><Icon name={icon} size={11} /></Cell>
          <RowLabel $sel={look === "s"} $purple={look === "p"}>{label}</RowLabel>
        </TreeRow>
      ))}
    </Tree>
    <VScroll $w={12} $at={78} $len={199}><Scroller dir="up" /><Scroller dir="down" /></VScroll>
  </TreeArea>
);

const PathDialog = () => (
  <Dialog aria-label="刀轨可视化">
    <DialogTitle>
      <Icon name="gear" size={11} />
      <DialogName>刀轨可视化</DialogName>
      <CloseButton aria-label="关闭"><Glyph viewBox="0 0 10 10" $size={10}><path d="M1 1l8 8M9 1L1 9" stroke="currentColor" strokeWidth="1.400" /></Glyph></CloseButton>
    </DialogTitle>
    <ListFrame>
      <ListRow>
        <PathList>{PATHS.map((t, i) => <PathItem key={t} $sel={i === 0}>{t}</PathItem>)}</PathList>
        <VScroll $w={11} $at={10} $len={32}><Scroller dir="up" /><Scroller dir="down" /></VScroll>
      </ListRow>
      <HScroll $h={13} $tone="#a9a9a9" $len={83} $end={14}><Scroller dir="left" /><Scroller dir="right" /></HScroll>
    </ListFrame>
    <SliderBlock $top={2}>
      <Ends $inset>1</Ends>
      <Slider type="range" min="1" max="657" defaultValue="1" aria-label="刀轨位置" />
      <Ends><span>1</span><span>657</span></Ends>
    </SliderBlock>
    <Caption $top={4}>进给率 0.000000</Caption>
    <Tabs>
      <Tab $w={35}>重播</Tab>
      <Tab $w={42} $on>3D 动态</Tab>
      <Tab $w={39}>2D 动态</Tab>
    </Tabs>
    <Panel>
      <FormRow><label htmlFor="toolShow">刀具显示</label><Choice id="toolShow" w={34} value="刀具" /></FormRow>
      <FormRow><label htmlFor="pathShow">刀轨</label><Choice id="pathShow" w={90} value="无" /></FormRow>
      <FormRow><label htmlFor="ipwRes">IPW 分辨率</label><Choice id="ipwRes" w={42} value="精细" /></FormRow>
      <ButtonRow><PushButton>显示选项</PushButton></ButtonRow>
      <Rule />
      <FormRow><label htmlFor="ipw">IPW</label><Choice id="ipw" w={58} value="无" /></FormRow>
      <Facet>
        <FacetTitle>小平面化的实体</FacetTitle>
        <RadioRow>
          <Option><Radio type="radio" name="solid" defaultChecked />IPW</Option>
          <Option><Radio type="radio" name="solid" />过切</Option>
          <Option><Radio type="radio" name="solid" />过剩</Option>
        </RadioRow>
      </Facet>
      <ButtonRow><PushButton>创建</PushButton><PushButton>删除</PushButton><PushButton>分析</PushButton></ButtonRow>
      <ButtonRow><PushButton>按颜色显示厚度</PushButton></ButtonRow>
      <Rule />
      <Option><Tick type="checkbox" defaultChecked />IPW 碰撞检查</Option>
      <Option><Tick type="checkbox" defaultChecked />检查刀具和夹持器</Option>
      <ButtonRow><PushButton>碰撞设置</PushButton><PushButton>列表</PushButton></ButtonRow>
      <Rule />
      <ButtonRow><PushButton>重置</PushButton></ButtonRow>
      <Rule />
      <Option><Tick type="checkbox" />抑制动画</Option>
    </Panel>
    <Caption $top={2}>动画速度</Caption>
    <SliderBlock $top={3}>
      <Ends $end $inset>10</Ends>
      <Slider type="range" min="1" max="10" defaultValue="10" aria-label="动画速度" />
      <Ends><span>1</span><span>10</span></Ends>
    </SliderBlock>
    <Player>
      {PLAY.map(([name, d]) => (
        <PlayButton key={name} aria-label={name}>
          <Glyph viewBox="0 0 16 16" $size={15}><path d={d} fill="#9d8a8a" stroke="#9d8a8a" strokeWidth="1" /></Glyph>
        </PlayButton>
      ))}
      <PlayButton $on aria-label="停止"><Glyph viewBox="0 0 8 8" $size={8}><path d="M0 0h8v8H0z" fill="#8c0d0d" /></Glyph></PlayButton>
    </Player>
    <Actions><ActionButton>确定</ActionButton><ActionButton>取消</ActionButton></Actions>
  </Dialog>
);

const Ime = () => (
  <ImeBar>
    <Glyph viewBox="0 0 18 18" $size={18}>
      <rect x="0" y="0" width="17" height="17" rx="2" fill="#e8622a" transform="rotate(-8 9 9)" />
      <path d="M14 4C8 2 3 4 4 7s9 1 9 4-6 3-10 1" fill="none" stroke="#fff" strokeWidth="2.600" />
    </Glyph>
    <ImeButton>中</ImeButton>
    <ImeButton aria-label="半角"><Glyph viewBox="0 0 10 10" $size={10}><path d="M6 0c5 4 0 12-6 8 4 0 7-3 6-8z" fill="#1c66b4" /></Glyph></ImeButton>
    <ImeButton aria-label="标点"><Glyph viewBox="0 0 10 10" $size={10}><circle cx="3" cy="3" r="1.500" fill="none" stroke="#1c66b4" /><path d="M6 5h2v2L6 9" fill="#1c66b4" stroke="#1c66b4" /></Glyph></ImeButton>
    <ImeButton aria-label="软键盘"><Glyph viewBox="0 0 12 10" $size={11}><path d="M.5 1.500h11v7H.5z" fill="none" stroke="#1c66b4" strokeWidth="1.400" /><path d="M2 4h8M2 6.500h8" stroke="#1c66b4" strokeDasharray="2 1" /></Glyph></ImeButton>
    <ImeButton aria-label="账户"><Glyph viewBox="0 0 12 12" $size={11}><circle cx="4" cy="3" r="2" fill="#bbb" /><path d="M1 11V7h5v4z" fill="#bbb" /><path d="M6 7h5v4H6z" fill="#fff" stroke="#bbb" /></Glyph></ImeButton>
    <ImeButton aria-label="皮肤"><Glyph viewBox="0 0 12 12" $size={10}><path d="M0 2l4-1q2 2 4 0l4 1v3H9v7H3V5H0z" fill="#1c66b4" /></Glyph></ImeButton>
    <ImeButton aria-label="工具"><Glyph viewBox="0 0 12 12" $size={10}><path d="M2 11l5-5" stroke="#1c66b4" strokeWidth="2.600" /><path d="M8 0L6 4l2 3 4-2 0-2-3 1-1-1 2-2z" fill="#1c66b4" /></Glyph></ImeButton>
  </ImeBar>
);

export default function App() {
  return (
    <Page lang="zh-CN">
      <GlobalStyle />
      <Letterbox $h={13} />
      <TitleBar>
        <Logo>NX</Logo>
        <DocTitle>{"勤奋，是取得成功的关键。 - 加工 - [070-A-.prt （ 修改的 ） ]"}</DocTitle>
        <Brand>SIEMENS</Brand>
        <WinControls />
      </TitleBar>
      <MenuBar>
        <Glyph viewBox="0 0 12 12" $size={12}><path d="M1 1h4v10H1z" fill="#8fa7c4" /><path d="M3 2l3 2v6l-3 1zM6 3h5L8 7H6z" fill="#3c4f80" /></Glyph>
        <MenuList>
          {MENUS.map(([name, key]) => (
            <MenuButton key={name}>{name}{key && <>(<u>{key}</u>)</>}</MenuButton>
          ))}
        </MenuList>
        <WinControls dark />
      </MenuBar>
      <ToolBar $h={24}>
        <ToolSet>
          <Grip />
          <StartButton><Icon name="start" />启动</StartButton>
          <Tools wide list={["v", "file", "open", "save", "print", "|", "cut", "copy", "paste", "del", "|", "undo", "v", "|", "finish", "v", "info", "|"]} />
          <SearchBox><SearchInput placeholder="查找命令" aria-label="查找命令" /><Icon name="find" size={12} /></SearchBox>
          <Sep />
          <Tools list={["_", "#", "fit", "v", "orient", "v", "sphere", "v", "section", "plane", "v", "swatch", "v", "|", "door", "doorRed", "_", "#", "stack", "path", "v", "|", "tool1", "tool2", "|", "verify", "v", "|", "measure", "v", "ruler", "_"]} />
        </ToolSet>
      </ToolBar>
      <FilterBar $h={24}>
        <Choice w={119} value="" label="类型过滤器" big />
        <Choice w={272} value="整个装配" label="选择范围" big />
        <Icon name="cube" size={14} />
        <FilterGap />
        <CaretButton $low aria-label="工具条选项" />
      </FilterBar>
      <PromptBar><span>选择“步进”或“播放”，开始动态除料</span><Icon name="frame" size={11} /></PromptBar>
      <Work>
        <ResourceBar>
          <SettingsTab aria-label="设置"><Icon name="gear" size={10} /></SettingsTab>
          {RESOURCES.map(([name, gap]) => (
            <ResourceTab key={name} $gap={gap} $active={name === "oper"} aria-label={name}><Icon name={name} /></ResourceTab>
          ))}
        </ResourceBar>
        <Navigator>
          <NavHeader><NavTitle>工序导航器 - 程序顺序</NavTitle><PinButton aria-label="最大化" /></NavHeader>
          <ColumnHeader>名称</ColumnHeader>
          <NavTree />
          <HScroll $h={13} $tone="#cbcbcb" $len={27} $end={13}><Scroller dir="left" /><Scroller dir="right" /></HScroll>
          <Splitter />
          <Fold>相依性<Chevron dir="down" size={10} color="#2a7ea6" /></Fold>
          <Fold>细节<Chevron dir="down" size={10} color="#2a7ea6" /></Fold>
        </Navigator>
        <Backdrop />
        <Viewport>
          <MachiningScene />
          <Watermark $x={168} $y={25} $size={50}>学院</Watermark>
          <Watermark $x={152} $y={72} $size={29}>造型  编程</Watermark>
          <Watermark $x={159} $y={491} $size={36} $bold>冠教育</Watermark>
          <WideMark $x={166} $y={523} $size={12} $bold>AN EDUCATION</WideMark>
          <Watermark $x={309} $y={494} $size={32}>没有攀登不上的高峰，只有不努力的人！</Watermark>
          <Ime />
        </Viewport>
        <EdgeHandle />
      </Work>
      <ToolBar $h={23} $indent={141}>
        <ToolSet>
          <Grip />
          <IconRun><Tools dim list={BOTTOM} /></IconRun>
          <Tools dim list={["v", "gHex", "v", "gAxes", "gGrid", "gFrameO", "gTools", "gBox", "gCone", "gO", "_"]} />
        </ToolSet>
      </ToolBar>
      <Letterbox $h={14} />
      <PathDialog />
      <GroupMark $x={272} $y={232} $size={20} $bold><Mono>UG</Mono>编程学习群<Mono>Q:726236503</Mono></GroupMark>
    </Page>
  );
}
